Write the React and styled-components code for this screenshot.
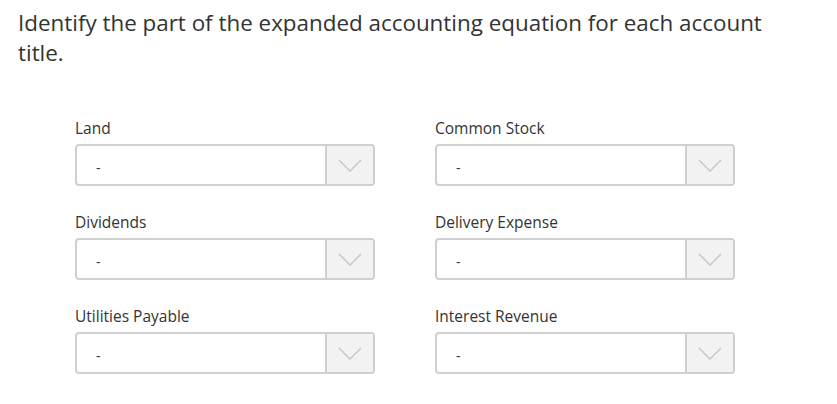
import styled, { createGlobalStyle } from 'styled-components'

const GlobalStyle = createGlobalStyle`
  body {
    margin: 0;
    background: #ffffff;
    font-family: 'Open Sans', 'Noto Sans', sans-serif;
    color: #333333;
  }
`

const Page = styled.div`
  width: 837px;
  height: 404px;
  padding: 8px 18px 0;
  box-sizing: border-box;
`

const Prompt = styled.div`
  font-size: 22.4px;
  line-height: 30px;
  color: #333333;
  width: 780px;
`

const Grid = styled.div`
  display: grid;
  grid-template-columns: 300px 300px;
  column-gap: 60px;
  row-gap: 26px;
  margin: 50px 0 0 57px;
`

const Field = styled.div`
  display: flex;
  flex-direction: column;
`

const Label = styled.div`
  font-size: 15.5px;
  line-height: 20px;
  color: #333333;
  margin-bottom: 6px;
`

const Select = styled.div`
  display: flex;
  height: 42px;
  box-sizing: border-box;
  border: 2px solid #d0d0d0;
  border-radius: 4px;
  overflow: hidden;
  background: #ffffff;
`

const Value = styled.div`
  flex: 1;
  display: flex;
  align-items: center;
  padding-left: 19px;
  padding-top: 4px;
  font-size: 14px;
  color: #333333;
`

const Arrow = styled.div`
  width: 46px;
  border-left: 2px solid #d0d0d0;
  background: #f2f2f2;
  display: flex;
  align-items: center;
  justify-content: center;
`

const fields = [
  'Land',
  'Common Stock',
  'Dividends',
  'Delivery Expense',
  'Utilities Payable',
  'Interest Revenue',
]

const Chevron = () => (
  <svg width="24" height="13" viewBox="0 0 24 13">
    <path d="M1 1 L12 12 L23 1" fill="none" stroke="#c8c8c8" strokeWidth="1.5" />
  </svg>
)

const App = () => (
  <>
    <GlobalStyle />
    <Page>
      <Prompt>
        Identify the part of the expanded accounting equation for each account title.
      </Prompt>
      <Grid>
        {fields.map(name => (
          <Field key={name}>
            <Label>{name}</Label>
            <Select>
              <Value>-</Value>
              <Arrow>
                <Chevron />
              </Arrow>
            </Select>
          </Field>
        ))}
      </Grid>
    </Page>
  </>
)

export default App
